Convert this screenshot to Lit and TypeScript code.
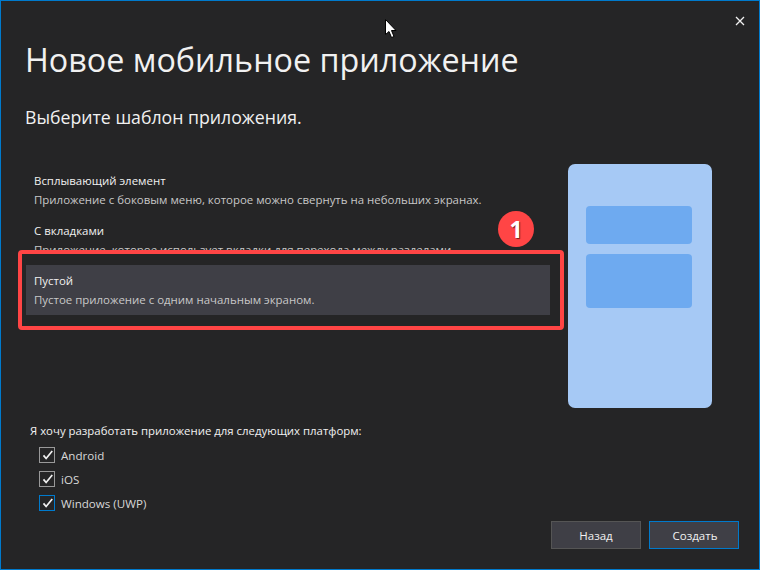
import { LitElement, html, css, svg } from "lit";
import { customElement } from "lit/decorators.js";

const check = svg`<svg class="tick" viewBox="0 0 16 16" width="14" height="14"><path d="M4 8.5 L7 12 L14 3.5" fill="none" stroke="#f1f1f1" stroke-width="2"/></svg>`;

@customElement("app-root")
export class AppRoot extends LitElement {
  static styles = css`
    :host {
      display: block;
      width: 760px;
      height: 570px;
      font-family: "Open Sans", "Noto Sans", sans-serif;
      color: #f1f1f1;
    }
    .window {
      box-sizing: border-box;
      position: relative;
      width: 760px;
      height: 570px;
      background: #252526;
      border: 1px solid #007acc;
      overflow: hidden;
      display: flex;
      flex-direction: column;
    }
    .topbar {
      height: 33px;
      display: flex;
      justify-content: flex-end;
      padding: 15px 14px 0 0;
      box-sizing: border-box;
    }
    .topbar svg { display: block; }
    h1 {
      margin: 0 0 0 24px;
      height: 50px;
      line-height: 50px;
      font-size: 32.3px;
      font-weight: 400;
      color: #f1f1f1;
      white-space: nowrap;
    }
    h2 {
      margin: 21px 0 0 24px;
      height: 24px;
      line-height: 24px;
      font-size: 17.7px;
      font-weight: 400;
      color: #f1f1f1;
      white-space: nowrap;
    }
    .main {
      margin: 35px 0 0 25px;
      display: flex;
      gap: 18px;
      align-items: flex-start;
    }
    .list { width: 524px; padding-top: 1px; }
    .row {
      box-sizing: border-box;
      height: 50px;
      padding: 6px 8px 0;
      font-size: 11.45px;
      line-height: 19px;
      white-space: nowrap;
    }
    .row.clipped { height: 35px; overflow: hidden; margin-bottom: 15px; }
    .row.selected { background: #3f3f46; }
    .row .name { color: #f1f1f1; }
    .row .desc { color: #c8c8c8; }
    .phone {
      box-sizing: border-box;
      width: 144px;
      height: 244px;
      border-radius: 7px;
      background: #a6c9f5;
      padding: 42px 20px 0 18px;
      display: flex;
      flex-direction: column;
      gap: 10px;
    }
    .block { background: #6eaaf0; border-radius: 4px; }
    .b1 { height: 38px; }
    .b2 { height: 54px; }
    .platforms { margin: 13px 0 0 29px; font-size: 11.4px; }
    .plabel { height: 20px; line-height: 20px; color: #f1f1f1; white-space: nowrap; }
    .opts { margin: 6px 0 0 9px; display: flex; flex-direction: column; gap: 8px; }
    .opt { display: flex; align-items: center; gap: 6px; height: 16px; color: #d8d8d8; font-size: 11.6px; }
    .box {
      box-sizing: border-box;
      width: 16px;
      height: 16px;
      border: 1px solid #999;
      display: flex;
      align-items: center;
      justify-content: center;
    }
    .box.focus { border-color: #007acc; }
    .tick { display: block; }
    .footer {
      margin: 10px 20px 0 0;
      display: flex;
      justify-content: flex-end;
      gap: 8px;
    }
    button {
      box-sizing: border-box;
      width: 90px;
      height: 28px;
      background: #3f3f46;
      border: 1px solid #555;
      color: #f1f1f1;
      font: inherit;
      font-size: 11.5px;
      padding: 0;
    }
    button.primary { border-color: #007acc; padding-left: 2px; }
    .annot {
      position: absolute;
      left: 17px;
      top: 249px;
      width: 546px;
      height: 80px;
      box-sizing: border-box;
      border: 4px solid #ff4545;
      border-radius: 4px;
    }
    .badge {
      position: absolute;
      left: 497px;
      top: 210px;
      width: 36px;
      height: 36px;
      border-radius: 50%;
      background: #ff4545;
      color: #fff;
      font-family: "Open Sans", sans-serif;
      font-weight: 700;
      font-size: 23px;
      line-height: 36px;
      text-align: center;
      text-shadow: 1px 1px 1px rgba(0,0,0,.55);
    }
    .cursor { position: absolute; left: 383px; top: 17px; display: block; }
  `;

  render() {
    return html`
      <div class="window">
        <div class="topbar">
          <svg width="10" height="10" viewBox="0 0 10 10"><path d="M1 1 L9 9 M9 1 L1 9" stroke="#f1f1f1" stroke-width="1.3" fill="none"/></svg>
        </div>
        <h1>Новое мобильное приложение</h1>
        <h2>Выберите шаблон приложения.</h2>
        <div class="main">
          <div class="list">
            <div class="row">
              <div class="name">Всплывающий элемент</div>
              <div class="desc">Приложение с боковым меню, которое можно свернуть на небольших экранах.</div>
            </div>
            <div class="row clipped">
              <div class="name">С вкладками</div>
              <div class="desc">Приложение, которое использует вкладки для перехода между разделами.</div>
            </div>
            <div class="row selected">
              <div class="name">Пустой</div>
              <div class="desc">Пустое приложение с одним начальным экраном.</div>
            </div>
          </div>
          <div class="phone">
            <div class="block b1"></div>
            <div class="block b2"></div>
          </div>
        </div>
        <div class="platforms">
          <div class="plabel">Я хочу разработать приложение для следующих платформ:</div>
          <div class="opts">
            <div class="opt"><span class="box">${check}</span>Android</div>
            <div class="opt"><span class="box">${check}</span>iOS</div>
            <div class="opt"><span class="box focus">${check}</span>Windows (UWP)</div>
          </div>
        </div>
        <div class="footer">
          <button>Назад</button>
          <button class="primary">Создать</button>
        </div>
        <div class="annot"></div>
        <div class="badge">1</div>
        <svg class="cursor" width="14" height="22" viewBox="0 0 14 22">
          <path d="M1.5 1.5 L1.5 16.5 L5 13.5 L7.5 19.5 L10 18.5 L7.5 12.5 L12 12.5 Z" fill="#fff" stroke="#000" stroke-width="1"/>
        </svg>
      </div>
    `;
  }
}
